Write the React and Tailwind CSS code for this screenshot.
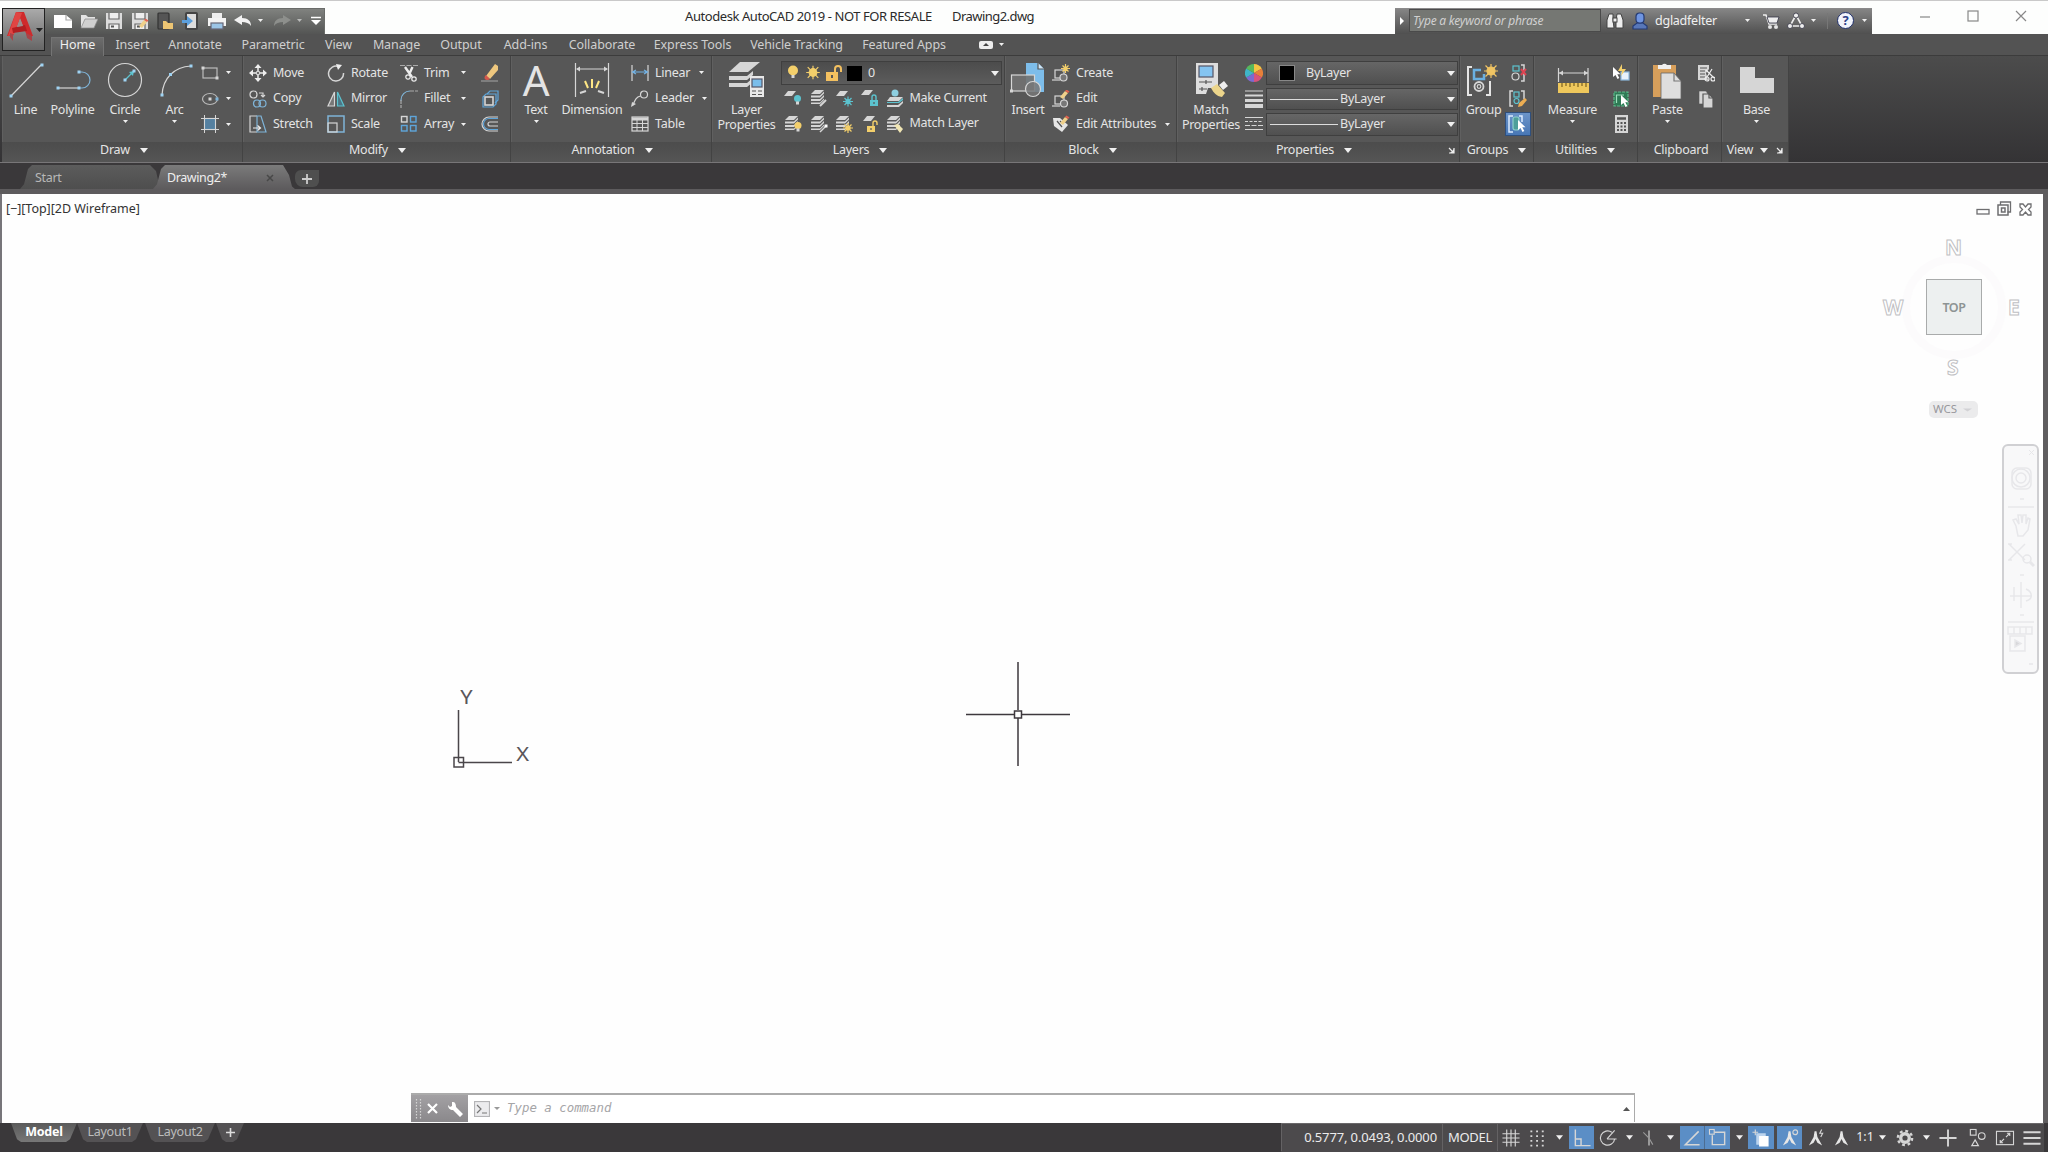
import React from 'react'
import clsx from 'clsx'

const L = '#d6d6d6'
const B = '#7fb4d8'
const Y = '#f3cf6b'
const T = '#5cc3cf'

function Svg({ w = 18, h, className, children }) {
  const height = h || w
  return (
    <svg width={w} height={height} viewBox={`0 0 ${w} ${height}`} fill="none" stroke={L} strokeWidth="1.2" className={clsx('shrink-0', className)}>
      {children}
    </svg>
  )
}

function Caret({ big, className }) {
  return big ? (
    <svg width="8" height="5" viewBox="0 0 8 5" className={clsx('shrink-0', className)}><path d="M0 0h8L4 5z" fill="#f0f0f0" /></svg>
  ) : (
    <svg width="5" height="3" viewBox="0 0 5 3" className={clsx('shrink-0', className)}><path d="M0 0h5L2.5 3z" fill="#f0f0f0" /></svg>
  )
}

/* ---------- small icon parts ---------- */
const Sheet = ({ x = 0, y = 0, fill = L }) => <path d={`M${x + 4} ${y}h8l-4 5h-8z`} fill={fill} stroke="none" />
const Stack = () => (
  <g stroke="none" fill={L}>
    <path d="M5 1h9l-4 4H1z" />
    <path d="M1 6.500h9l4-4v2l-4 4H1z" />
    <path d="M1 10h9l4-4v2l-4 4H1z" />
    <path d="M1 13.500h9l4-4v1.500l-4 4H1z" />
  </g>
)
const Bulb = ({ x, y, fill = Y, r = 3.5 }) => (
  <g stroke="none"><circle cx={x} cy={y} r={r} fill={fill} /><rect x={x - 1.5} y={y + r - 0.5} width="3" height="3" fill={L} /></g>
)
const Sun = ({ x, y, r = 3, fill = Y }) => (
  <g stroke={fill} strokeWidth="1.2">
    <circle cx={x} cy={y} r={r} fill={fill} />
    <path d={`M${x - r - 3} ${y}h${2 * r + 6}M${x} ${y - r - 3}v${2 * r + 6}M${x - r - 1.5} ${y - r - 1.5}l${2 * r + 3} ${2 * r + 3}M${x + r + 1.5} ${y - r - 1.5}l${-2 * r - 3} ${2 * r + 3}`} />
  </g>
)
const Lock = ({ x, y, fill, open }) => (
  <g>
    <path d={open ? `M${x + 6} ${y}v-3a2 2 0 0 1 4 0v2` : `M${x + 2} ${y}v-3a2 2 0 0 1 4 0v3`} stroke={fill} strokeWidth="1.4" />
    <rect x={x} y={y} width="8" height="6" fill={fill} stroke="none" />
    <path d={`M${x + 4} ${y + 2}v2`} stroke="#555" />
  </g>
)
const Cursor = ({ x, y }) => <path d={`M${x} ${y}v10l2.5-2 2 4 1.8-1-2-3.7h3.2z`} fill="#fff" stroke="none" />
const Pencil = ({ x = 9, y = 1 }) => (
  <g stroke="none"><path d={`M${x} ${y + 7}l5-6 3 2-5 6z`} fill="#efd08a" /><path d={`M${x + 5} ${y + 1}l1.5-1.5 3 2-1.500 1.500z`} fill="#e0624f" /></g>
)
const Dot = ({ x, y, fill = '#9fd3f3' }) => <rect x={x - 1.5} y={y - 1.5} width="3" height="3" fill={fill} stroke="none" />

const icons = {
  line: <Svg w={38}><path d="M4 35L34 4" /><Dot x={4} y={35} /><Dot x={35} y={4} /></Svg>,
  polyline: <Svg w={38}><path d="M4 27h21" /><path d="M25 11h3a8 8 0 0 1 0 16h-3" stroke={B} /><Dot x={4} y={27} /><Dot x={25} y={27} /><Dot x={25} y={11} /></Svg>,
  circle: <Svg w={38}><circle cx="19" cy="19" r="16.500" /><path d="M19 19l9-9" stroke={T} /><Dot x={19} y={19} /><path d="M28 10l-5 1 4 4z" fill={T} stroke="none" /><Dot x={28} y={10} /></Svg>,
  arc: <Svg w={38}><path d="M6 34C7 17 18 6 35 5" /><Dot x={6} y={34} /><Dot x={14.5} y={13.5} /><Dot x={35} y={5} /></Svg>,
  rect: <Svg><rect x="2" y="4" width="14" height="10" stroke="#bbb" /><Dot x={2} y={4} fill={L} /><Dot x={16} y={14} fill={L} /></Svg>,
  ellipse: <Svg><ellipse cx="9" cy="9" rx="7.500" ry="5.500" stroke="#bbb" /><Dot x={9} y={9} fill={L} /><Dot x={16} y={9} fill={B} /></Svg>,
  hatch: <Svg><rect x="3.500" y="3.500" width="11" height="11" fill="#5580a0" stroke={B} /><path d="M3.500 0v18M14.500 0v18M0 3.500h18M0 14.500h18" strokeWidth="1" /></Svg>,
  move: <Svg><path d="M9 2v14M2 9h14" stroke="#eee" strokeWidth="1.500" /><path d="M9 0l3.500 4h-7zM9 18l3.500-4h-7zM0 9l4-3.500v7zM18 9l-4-3.500v7z" fill="#eee" stroke="none" /><circle cx="9" cy="9" r="1.700" fill="#555" /></Svg>,
  copy: <Svg><circle cx="4.500" cy="4.500" r="3.500" /><path d="M10 3h4v4M12 5l2 2 2-2" /><circle cx="8" cy="13.500" r="3.500" stroke={B} /><circle cx="13.500" cy="13.500" r="3.500" stroke={B} /></Svg>,
  stretch: <Svg><path d="M8 1H1v16h7" /><path d="M8 1h4l5 16H8z" stroke={B} /><path d="M4 13h7M8.500 10.500l3 2.500-3 2.500" stroke="#eee" /></Svg>,
  rotate: <Svg><path d="M11.500 2.500A7.500 7.500 0 1 0 16.500 9" strokeWidth="1.500" /><path d="M9 0l6 1-4 5z" fill="#eee" stroke="none" /></Svg>,
  mirror: <Svg><path d="M7.500 2v14H1z" fill="#777" /><path d="M10.500 2v14H17z" stroke={T} fill="#4d7686" /></Svg>,
  scale: <Svg><rect x="1" y="1" width="16" height="16" stroke={B} strokeWidth="1.500" /><rect x="1" y="8" width="9" height="9" /></Svg>,
  trim: <Svg><path d="M0 1.500h18" strokeDasharray="5 1.500" stroke="#aaa" /><path d="M5 3l7 10M12.500 3L10 8.500" stroke="#eee" strokeWidth="2.400" /><circle cx="8" cy="13" r="2.200" stroke="#eee" /><circle cx="14" cy="15" r="2.200" stroke="#eee" /></Svg>,
  fillet: <Svg><path d="M1 11V10A9 9 0 0 1 10 1" stroke={B} /><path d="M10 1h8M1 10v8" stroke="#aaa" strokeDasharray="4 1" /></Svg>,
  array: <Svg>{[[1.5, 1.5], [10.5, 1.5], [1.5, 10.5], [10.5, 10.5]].map(([x, y]) => <rect key={`${x}-${y}`} x={x} y={y} width="5.500" height="5.500" stroke={x + y > 3 ? '#5ea5da' : L} strokeWidth="1.400" />)}</Svg>,
  erase: <Svg><path d="M5 12L14 0l3 2v4l-8 9z" fill="#eec77e" stroke="none" /><path d="M5 11l4 4c-2 2-7 1-5-3z" fill="#d4574c" stroke="none" /><path d="M0 17h17" stroke="#999" /></Svg>,
  explode: <Svg><path d="M6 4l3-3h8v9l-3 3" stroke="#5ea5da" /><path d="M2 7l3-3h10v10l-3 3H2z" stroke="#5ea5da" /><rect x="4" y="7" width="8" height="8" stroke={L} strokeWidth="1.600" /></Svg>,
  offset: <Svg><path d="M17 2H8a7 7 0 0 0 0 14h9" stroke={L} /><path d="M17 3.500H8a5.500 5.500 0 0 0 0 11h9" stroke="#5ea5da" /><path d="M17 7H9a2 2 0 0 0 0 4h8" stroke={L} /></Svg>,
  dimension: (
    <Svg w={38}>
      <path d="M2.500 2v34M35.500 2v34M4 8h30" />
      <path d="M3 8l4-2.500v5zM35 8l-4-2.500v5z" fill={L} stroke="none" />
      <path d="M19 18v9M12 20l3 7M26 20l-3 7" stroke="#ffe785" strokeWidth="2" />
      <path d="M7 32l6-2M31 32l-6-2" stroke={L} strokeWidth="2" />
    </Svg>
  ),
  linear: <Svg><path d="M1 1v16M17 1v16" /><path d="M1 8h16M5 6L1.500 8 5 10M13 6l3.500 2-3.500 2" stroke="#72b2e4" /></Svg>,
  leader: <Svg><circle cx="13" cy="4.500" r="3.500" /><path d="M9.500 6C5 7 4 10 2 15" /><path d="M0 17l1-5 4 2z" fill={L} stroke="none" /></Svg>,
  table: <Svg><rect x="1" y="2" width="16" height="14" /><path d="M1 4h16" strokeWidth="3" /><path d="M1 8.500h16M1 12.500h16M6 5v11M11.500 5v11" strokeWidth="1" /></Svg>,
  layerProps: (
    <Svg w={38}>
      <g fill={L} stroke="none">
        <path d="M12 1h20L20 11H1z" /><path d="M1 15h18l6-5v4l-6 5H1z" /><path d="M1 22h18l6-5v4l-6 5H1z" />
      </g>
      <rect x="22" y="15" width="14" height="21" fill="#e8e8e8" stroke="none" />
      <rect x="24" y="18" width="10" height="8" fill="#79bdea" stroke="#556" />
      <path d="M24 30h4M30 30h4M24 33.500h4M30 33.500h4" stroke="#555" />
    </Svg>
  ),
  layOff: <Svg><Sheet x={0} y={2} /><Bulb x={13.500} y={9.500} fill={T} /></Svg>,
  layIso: <Svg><Stack /><path d="M10 17l6-6" stroke={L} strokeWidth="2" /></Svg>,
  layFreeze: <Svg><Sheet x={1} y={2} /><Sun x={13} y={12.500} r={2} fill={T} /></Svg>,
  layLock: <Svg><Sheet x={0} y={1} /><Lock x={9} y={11} fill={T} /></Svg>,
  layCurrent: <Svg><path d="M4 8h13l-4 4H1z" fill={L} stroke="none" /><path d="M1 13h11l5-4v2l-4 3H1z" fill={T} stroke="none" /><path d="M1 16h11l5-4v2l-4 4H1z" fill={L} stroke="none" /><circle cx="9" cy="4" r="3.500" fill="#8ecfe0" stroke="none" /></Svg>,
  layOn: <Svg><Stack /><Bulb x={14} y={10.500} /></Svg>,
  layUniso: <Svg><Stack /><path d="M10 17l6-6" stroke={L} strokeWidth="1.500" /><Dot x={16} y={11} fill="#fff" /></Svg>,
  layThaw: <Svg><Stack /><Sun x={13} y={13} r={2} /></Svg>,
  layUnlock: <Svg><Sheet x={2} y={1} /><Lock x={6} y={11} fill={Y} open /></Svg>,
  layMatch: <Svg><Stack /><path d="M8 10l4-1 5 5-3 4z" fill="#f1e6b4" stroke="none" /></Svg>,
  insert: (
    <Svg w={38}>
      <path d="M17 2h12l6 6v23H17z" fill="#7dbdea" stroke="none" /><path d="M29 2v6h6" fill="#cfe6f7" stroke="#555" />
      <rect x="2.500" y="14" width="23" height="16" fill="#727272" fillOpacity=".9" /><circle cx="24" cy="28" r="7.500" fill="#777" fillOpacity=".85" />
      <Dot x={2.500} y={30} fill={L} />
    </Svg>
  ),
  create: <Svg><rect x="3" y="6" width="9" height="8" /><path d="M0 16h8" /><circle cx="11.500" cy="13.500" r="3.500" fill="#777" /><Sun x={13.500} y={4.500} r={1.500} /></Svg>,
  edit: <Svg><rect x="3" y="6" width="9" height="8" /><path d="M0 16h8" /><circle cx="12" cy="13.500" r="3.500" fill="#777" /><Pencil x={8} y={0} /></Svg>,
  editAttr: <Svg><path d="M1 3h7l8 7-6 7-8-6z" fill="#e6e6e6" stroke="none" /><path d="M5 6l5 6M8 6l2 2" stroke="#555" /><Pencil x={8} y={1} /></Svg>,
  matchProps: (
    <Svg w={38}>
      <path d="M4 2h22v25H16l-2 6H4z" fill="#dedede" stroke="none" /><rect x="7" y="5" width="14" height="11" fill="#84c4f1" stroke="#556" />
      <path d="M7 21h13M7 28h8M14 19v4M10 26v4" stroke="#555" /><path d="M27 24l5-4 4 5-5 4z" fill="#eee" stroke="none" /><path d="M19 27l6-4 8 9-3 4c-6-1-8-4-11-9z" fill="#ecd58b" stroke="none" />
    </Svg>
  ),
  colorWheel: (
    <Svg>
      <g stroke="none">
        <path d="M9 9V0a9 9 0 0 1 7.800 4.500z" fill="#f4c542" /><path d="M9 9l7.800-4.500a9 9 0 0 1 0 9z" fill="#e8803a" /><path d="M9 9l7.800 4.500A9 9 0 0 1 9 18z" fill="#d8527c" />
        <path d="M9 9v9a9 9 0 0 1-7.800-4.500z" fill="#7c6ad0" /><path d="M9 9l-7.800 4.500a9 9 0 0 1 0-9z" fill="#3fb5c9" /><path d="M9 9L1.200 4.500A9 9 0 0 1 9 0z" fill="#58b85c" />
      </g>
    </Svg>
  ),
  lineWeight: <Svg><path d="M0 1h18" strokeWidth="1" /><path d="M0 5.500h18" strokeWidth="2" /><path d="M0 10.500h18" strokeWidth="3" /><path d="M0 16h18" strokeWidth="4" /></Svg>,
  lineType: <Svg><path d="M0 2.500h18M0 14.500h18" /><path d="M0 6.500h18" strokeDasharray="3 1.500" /><path d="M0 10.500h18" strokeDasharray="5 1.500" /></Svg>,
  group: (
    <Svg w={38}>
      <path d="M7 6H3v28h4M21 34h4V20" stroke="#e5e5e5" strokeWidth="2" /><path d="M16 9H9v9h10v-5" stroke="#6ab0e2" strokeWidth="2.500" />
      <circle cx="14" cy="25.500" r="4.500" strokeWidth="1.800" /><circle cx="14" cy="25.500" r="1.800" /><Sun x={26} y={10} r={4} fill="#f0c463" />
    </Svg>
  ),
  ungroup: <Svg><path d="M12 1h3v16h-3" stroke={L} strokeWidth="1.500" /><rect x="4" y="2" width="6" height="5" stroke={T} /><circle cx="6.500" cy="12.500" r="3.500" /><path d="M12 5l5 6M17 5l-5 6" stroke="#dc4452" strokeWidth="2" /></Svg>,
  groupEdit: <Svg><path d="M4 1H1v15h3M12 1h3v8" stroke={L} strokeWidth="1.500" /><rect x="5" y="2" width="5" height="5" stroke={T} /><circle cx="7.500" cy="11" r="2.500" stroke={T} /><path d="M9 17l1-4 6-5 2 2-5 6z" fill="#ecad52" stroke="none" /></Svg>,
  groupSel: <Svg w={22} h={20}><path d="M6 2H2v16h4M12 2h3v6" stroke="#dcecff" strokeWidth="1.500" /><rect x="6" y="3" width="6" height="13" rx="2" fill="#4e9f9a" stroke="#8fd0cc" /><Cursor x={11} y={6} /></Svg>,
  measure: <Svg w={38}><path d="M4.500 7v14M34 7v14M5 12h29" stroke={L} /><path d="M5 12l4-2.500v5zM34 12l-4-2.500v5z" fill={L} stroke="none" /><rect x="4" y="22" width="31" height="10" fill="#efc85c" stroke="none" /><path d="M8 22v4M12 22v3M16 22v4M20 22v3M24 22v4M28 22v3M32 22v4" stroke="#7a6120" /></Svg>,
  quickSel: <Svg><rect x="9" y="8" width="8" height="8" fill="#e8f2fb" stroke="#8bb8dd" /><path d="M10 0L6 7h4l-1 5 5-7h-4z" fill={Y} stroke="none" /><Cursor x={1} y={3} /></Svg>,
  selAll: <Svg><rect x="2" y="2" width="14" height="14" fill="#2f7a55" stroke="#5bb98a" strokeDasharray="3 1" /><path d="M4.500 13V5H12" stroke="#9ee0bd" /><Cursor x={9} y={5} /></Svg>,
  calc: <Svg><rect x="3" y="0" width="13" height="18" fill={L} stroke="none" /><path d="M5 3.500h9" stroke="#555" strokeWidth="2.500" /><path d="M5 8h9M5 11.500h9M5 15h9" stroke="#555" strokeWidth="2" strokeDasharray="2 1.500" /></Svg>,
  paste: <Svg w={38}><rect x="4" y="4" width="23" height="32" fill="#d79f5b" stroke="none" /><path d="M9 8V4h4a3 3 0 0 1 5 0h4v4z" fill="#f0f0f0" stroke="none" /><path d="M12 12h13l7 8v18H12z" fill="#dedede" stroke="#666" strokeWidth=".8" /><path d="M25 12v8h7" stroke="#777" /></Svg>,
  cut: <Svg><path d="M1 1h11v4l-3 4 2 7H1z" fill={L} stroke="none" /><path d="M3 4h7M3 7h5M3 10h5M3 13h5" stroke="#555" /><path d="M9 6l8 8M15 5l-5 8" stroke="#eee" /><circle cx="10" cy="15" r="2" stroke="#eee" /><circle cx="16" cy="15" r="2" stroke="#eee" /></Svg>,
  copyClip: <Svg><path d="M2 1h7l2 3v10H2z" fill={L} stroke="#555" strokeWidth=".6" /><path d="M6 4h6l4 4v10H6z" fill={L} stroke="#555" /><path d="M12 4v4h4" stroke="#555" /></Svg>,
  base: <Svg w={38}><path d="M2 6h15v11h19v15H2z" fill={L} stroke="none" /></Svg>,
}

/* ---------- ribbon ---------- */
function BigButton({ icon, label, second, arrow, className }) {
  return (
    <div className={clsx('flex flex-col items-center pt-[5px] text-center whitespace-nowrap', className)}>
      <div className="h-[39px] shrink-0">{icon}</div>
      <span className="h-4 leading-[19px]">{label}</span>
      {second && <span className="leading-[17px]">{second}</span>}
      {arrow && <Caret className="mt-[4px]" />}
    </div>
  )
}

function Row({ icon, label, arrow, active }) {
  return (
    <div className="flex h-[25.7px] items-center whitespace-nowrap">
      <span className={clsx('flex w-[18px] shrink-0 justify-center', active && '-mx-1 w-[26px] border border-[#2f4f7c] bg-gradient-to-b from-[#6b94c9] to-[#4877b5] py-px')}>{icon}</span>
      {label && <span className="pl-[6px]">{label}</span>}
      {arrow && <Caret className={arrow} />}
    </div>
  )
}

function Rows({ items, className }) {
  return (
    <div className={clsx('pt-[4px]', className)}>
      {items.map((item, i) => <Row key={i} icon={icons[item[0]]} label={item[1]} arrow={item[2]} active={item[3]} />)}
    </div>
  )
}

function Panel({ title, arrow = true, launcher, className, titleClass, children }) {
  return (
    <section className={clsx('flex shrink-0 flex-col border-r border-[#434343] bg-[#575757] shadow-[inset_1px_0_0_#606060]', className)}>
      <div className="flex h-[86px]">{children}</div>
      <div className={clsx('flex h-[20px] items-center justify-center gap-[10px] bg-gradient-to-b from-[#4c4c4c] to-[#555] pb-[3px]', titleClass)}>
        <span>{title}</span>
        {arrow && <Caret big />}
        {launcher && <Svg w={7} className={launcher}><path d="M1 1l3 3M6 1v5H1" stroke="#eee" /><path d="M6 2v4H2z" fill="#eee" stroke="none" /></Svg>}
      </div>
    </section>
  )
}

function Combo({ className, children }) {
  return (
    <div className={clsx('flex items-center border border-[#3f3f3f] bg-gradient-to-b from-[#666] to-[#505050] pr-[2px]', className)}>
      {children}
      <Caret big className="ml-auto" />
    </div>
  )
}

function Ribbon() {
  return (
    <div className="flex h-[107px] border-t border-[#3c3c3c] bg-gradient-to-b from-[#4c4c4c] to-[#343335] pl-[2px] text-[12.5px] tracking-[-0.25px] text-[#e4e4e4]">
      <Panel title="Draw" titleClass="pl-1" className="w-[241px]">
        <BigButton icon={icons.line} label="Line" className="w-[47px]" />
        <BigButton icon={icons.polyline} label="Polyline" className="w-[47px]" />
        <BigButton icon={icons.circle} label="Circle" arrow className="w-[58px]" />
        <BigButton icon={icons.arc} label="Arc" arrow className="w-[41px]" />
        <Rows className="pl-[6px]" items={[['rect', '', 'ml-[7px]'], ['ellipse', '', 'ml-[7px]'], ['hatch', '', 'ml-[7px]']]} />
      </Panel>

      <Panel title="Modify" titleClass="pl-[2px]" className="w-[268px]">
        <Rows className="w-[78px] pl-[6px]" items={[['move', 'Move'], ['copy', 'Copy'], ['stretch', 'Stretch']]} />
        <Rows className="w-[73px] pl-[6px]" items={[['rotate', 'Rotate'], ['mirror', 'Mirror'], ['scale', 'Scale']]} />
        <div className="flex w-[80px] pl-[6px]">
          <Rows className="w-[61px]" items={[['trim', 'Trim'], ['fillet', 'Fillet'], ['array', 'Array']]} />
          <div className="flex flex-col pt-[4px]">
            {[0, 1, 2].map((i) => <span key={i} className="flex h-[25.7px] items-center"><Caret /></span>)}
          </div>
        </div>
        <Rows className="pl-[7px]" items={[['erase'], ['explode'], ['offset']]} />
      </Panel>

      <Panel title="Annotation" titleClass="pl-[2px]" className="w-[201px]">
        <BigButton icon={<span className="block text-[42px] leading-[38px] text-[#e4e4e4]">A</span>} label="Text" arrow className="w-[50px]" />
        <BigButton icon={icons.dimension} label="Dimension" className="w-[62px]" />
        <Rows className="pl-[8px]" items={[['linear', 'Linear', 'ml-[9px]'], ['leader', 'Leader', 'ml-[8px]'], ['table', 'Table']]} />
      </Panel>

      <Panel title="Layers" titleClass="pl-1" className="w-[293px]">
        <BigButton icon={icons.layerProps} label="Layer" second="Properties" className="w-[69px]" />
        <div className="pt-[5px]">
          <Combo className="h-[24px] w-[221px] bg-gradient-to-b! from-[#4c4c4c]! to-[#5c5c5c]! pl-[3px]">
            <Svg w={62} h={20}><Bulb x={8} y={7.500} r={5} /><Sun x={28} y={9.500} r={3.800} /><path d="M50 9V6a3 3 0 0 1 6 0v3" stroke="#f3c060" strokeWidth="2" /><path d="M41 9h12v9H41z" fill="#f3c060" stroke="none" /><path d="M47 12v3" stroke="#555" strokeWidth="2" /></Svg>
            <span className="h-[15px] w-[15px] bg-black" />
            <span className="pl-[6px]">0</span>
          </Combo>
          {[['layOff', 'layIso', 'layFreeze', 'layLock', 'layCurrent', 'Make Current'], ['layOn', 'layUniso', 'layThaw', 'layUnlock', 'layMatch', 'Match Layer']].map((row) => (
            <div key={row[5]} className="flex h-[25.7px] items-center gap-[7.5px] pl-[3px] whitespace-nowrap">
              {row.slice(0, 5).map((name) => <React.Fragment key={name}>{icons[name]}</React.Fragment>)}
              <span className="-ml-[2px]">{row[5]}</span>
            </div>
          ))}
        </div>
      </Panel>

      <Panel title="Block" titleClass="pl-1" className="w-[172px]">
        <BigButton icon={icons.insert} label="Insert" className="w-[46px]" />
        <Rows className="pl-px" items={[['create', 'Create'], ['edit', 'Edit'], ['editAttr', 'Edit Attributes', 'ml-[9px]']]} />
      </Panel>

      <Panel title="Properties" launcher="absolute right-[4px]" titleClass="relative pr-[8px]" className="w-[283px]">
        <BigButton icon={icons.matchProps} label="Match" second="Properties" className="w-[68px]" />
        <Rows className="w-[21px]" items={[['colorWheel'], ['lineWeight'], ['lineType']]} />
        <div className="flex flex-col gap-[3px] pt-[5px]">
          <Combo className="h-[24px] w-[192px] pl-[12px]"><span className="mr-[11px] h-4 w-4 border border-[#888] bg-black" />ByLayer</Combo>
          <Combo className="h-[22px] w-[192px] pl-[3px]"><span className="mr-[2px] h-px w-[68px] bg-[#ddd]" />ByLayer</Combo>
          <Combo className="h-[23px] w-[192px] pl-[3px]"><span className="mr-[2px] h-px w-[68px] bg-[#ddd]" />ByLayer</Combo>
        </div>
      </Panel>

      <Panel title="Groups" className="w-[74px]">
        <BigButton icon={icons.group} label="Group" className="w-[47px]" />
        <Rows className="pl-[2px]" items={[['ungroup'], ['groupEdit'], ['groupSel', '', '', true]]} />
      </Panel>

      <Panel title="Utilities" titleClass="pr-px" className="w-[104px]">
        <BigButton icon={icons.measure} label="Measure" arrow className="w-[77px]" />
        <Rows className="pl-px" items={[['quickSel'], ['selAll'], ['calc']]} />
      </Panel>

      <Panel title="Clipboard" arrow={false} titleClass="pl-[3px]" className="w-[84px]">
        <BigButton icon={icons.paste} label="Paste" arrow className="w-[59px]" />
        <Rows items={[['cut'], ['copyClip']]} />
      </Panel>

      <Panel title="View" launcher="ml-px" titleClass="gap-[7px]!" className="w-[67px]">
        <BigButton icon={icons.base} label="Base" arrow className="w-[70px] pl-[3px]" />
      </Panel>
    </div>
  )
}

/* ---------- title bar ---------- */
const floppy = <><path d="M1 1h16v16H1z" fill="#dcdcdc" stroke="none" /><path d="M4 1v6h10V1M4 17v-5h10v5" stroke="#666" fill="#eee" /><path d="M6 14.500h3" stroke="#555" strokeWidth="2" /></>

function QuickAccess() {
  return (
    <div className="flex h-[26px] w-[280px] shrink-0 items-center border-t border-r border-[#6a6c69] bg-gradient-to-b from-[#80827f] to-[#545554] pb-[2px] pl-[9px]">
      <div className="flex gap-[7.600px]">
        <Svg><path d="M0 3h12l6 5v8H0z" fill="#fff" stroke="none" /><path d="M12 3v5h6" stroke="#aaa" /></Svg>
        <Svg><path d="M1 16V3h5l2 2h7v4" fill="#e3e3e3" stroke="none" /><path d="M1 16l4-9h13l-4 9z" fill="#d0d0d0" stroke="#888" strokeWidth=".7" /></Svg>
        <Svg>{floppy}</Svg>
        <Svg>{floppy}<Pencil x={8} y={7} /></Svg>
        <Svg><rect x="2" y="1" width="11" height="16" rx="1" fill="#555" stroke="#333" /><path d="M7 9h3l2 2h5v6H7z" fill="#edc573" stroke="none" /></Svg>
        <Svg><rect x="4" y="1" width="11" height="16" rx="1" fill="#ddd" stroke="#444" strokeWidth="2" /><path d="M0 8h5V4l6 5-6 5v-3H0z" fill="#5c9fdc" stroke="none" /></Svg>
        <Svg><rect x="4" y="1" width="10" height="5" fill="#eee" stroke="none" /><rect x="0" y="6" width="18" height="8" fill="#f3f3f3" stroke="none" /><rect x="3" y="11" width="12" height="6" fill="#9cc5e7" stroke="#667" /></Svg>
      </div>
      <Svg className="ml-[8px]"><path d="M0 8l8-5v3c6 0 9 3 9 8-2-3-5-4-9-4v3z" fill="#f2f2f2" stroke="none" /></Svg>
      <Caret className="ml-[6px]" />
      <Svg className="ml-[10px]"><path d="M18 8l-8-5v3c-6 0-9 3-9 8 2-3 5-4 9-4v3z" fill="#8d8f8c" stroke="none" /></Svg>
      <Caret className="ml-[6px] opacity-60" />
      <Svg w={10} className="ml-[9px]"><path d="M0 1.500h10" stroke="#fff" strokeWidth="1.500" /><path d="M0 4h10L5 9z" fill="#fff" stroke="none" /></Svg>
    </div>
  )
}

function InfoCenter() {
  return (
    <div className="flex h-[26px] w-[477px] shrink-0 items-center border-t border-[#8a8a8a] bg-gradient-to-b from-[#858585] to-[#505050] pb-[2px] text-[12.5px] text-[#f0f0f0]">
      <svg width="14" height="8" viewBox="0 0 14 8"><path d="M5 0l4 4-4 4z" fill="#fff" /></svg>
      <div className="flex h-[23px] w-[192px] items-center border border-[#4a4a4a] bg-[#757773] pl-[3px] text-[12px] tracking-[-0.22px] text-[#d0d0d0] italic">Type a keyword or phrase</div>
      <Svg className="ml-[5px]"><g fill="#eee" stroke="#444" strokeWidth="1"><path d="M3 2h4v6l1 8H1V8zM11 2h4l2 6v8h-7V8z" /><rect x="7" y="6" width="4" height="4" /></g></Svg>
      <Svg className="ml-[7px]"><path d="M6 11h6l4 3v3H2v-3z" fill="#5877b8" stroke="#243a73" /><rect x="5" y="1" width="8" height="10" rx="3.500" fill="#6f95e2" stroke="#243a73" /></Svg>
      <span className="w-[92px] pt-[2px] pl-[6px] tracking-[-0.25px]">dgladfelter</span>
      <Caret className="ml-[4px]" />
      <Svg className="ml-[12px]"><path d="M1 3h3l3 9h8" stroke="#eee" strokeWidth="1.500" /><path d="M5 5h12l-2 6H7z" fill="#eee" stroke="#334" strokeWidth=".8" /><circle cx="8" cy="15" r="1.500" fill="#eee" /><circle cx="14" cy="15" r="1.500" fill="#eee" /></Svg>
      <Svg className="ml-[7px]"><path d="M9 3L3 14h12z" stroke="#eee" strokeWidth="1.600" /><g fill="#eee" stroke="#334" strokeWidth=".8"><circle cx="9" cy="3.500" r="2.500" /><circle cx="3" cy="14" r="2.500" /><circle cx="15" cy="14" r="2.500" /></g></Svg>
      <Caret className="ml-[6px]" />
      <span className="ml-[11px] h-4 w-px bg-[#777]" />
      <span className="ml-[9px] flex h-[17px] w-[17px] items-center justify-center rounded-full border border-[#20306c] bg-[#f2f4fb] text-[13px] font-bold text-[#2c3f87]">?</span>
      <Caret className="ml-[8px]" />
    </div>
  )
}

const menuTabs = [
  ['Insert', 'w-[51px]'], ['Annotate', 'w-[74px]'], ['Parametric', 'w-[82px]'], ['View', 'w-[49px]'], ['Manage', 'w-[67px]'],
  ['Output', 'w-[62px]'], ['Add-ins', 'w-[67px]'], ['Collaborate', 'w-[86px]'], ['Express Tools', 'w-[95px]'],
  ['Vehicle Tracking', 'w-[113px]'], ['Featured Apps', 'w-[102px]'],
]

function Header() {
  return (
    <header className="relative">
      <div className="flex h-[34px] items-end border-t border-[#c9c9c9] bg-[#fdfefd] pl-[45px]">
        <QuickAccess />
        <div className="flex flex-1 self-center pb-[2px] pl-[360px] text-[13px] whitespace-pre text-[#2b2b2b]">
          <span className="w-[267px] tracking-[-0.43px]">Autodesk AutoCAD 2019 - NOT FOR RESALE</span>
          <span className="tracking-[-0.55px]">Drawing2.dwg</span>
        </div>
        <InfoCenter />
        <div className="flex w-[176px] items-center gap-[36px] self-center pb-[3px] pl-[47px]">
          <Svg w={12}><path d="M1 7h10" stroke="#888" /></Svg>
          <Svg w={12}><rect x="1" y="1" width="10" height="10" stroke="#888" /></Svg>
          <Svg w={12}><path d="M1 1l10 10M11 1L1 11" stroke="#888" /></Svg>
        </div>
      </div>
      <nav className="flex h-[21px] items-center bg-[#535353] pl-[51px] text-[12.5px] text-[#cfcfcf]">
        <div className="mt-1 mr-[3px] flex h-[19px] w-[53px] items-center justify-center border border-b-0 border-[#747474] bg-gradient-to-b from-[#6c6c6c] to-[#575757] pb-[3px] text-[#f0f0f0]">Home</div>
        {menuTabs.map(([name, w]) => <span key={name} className={clsx('pt-[2px] text-center tracking-[-0.1px] whitespace-nowrap', w)}>{name}</span>)}
        <span className="ml-6 flex h-[8px] w-[14px] items-center justify-center rounded-[2px] bg-[#eee]"><svg width="6" height="3" viewBox="0 0 6 3"><path d="M3 0l3 3H0z" fill="#444" /></svg></span>
        <Caret className="ml-[6px]" />
      </nav>
      <div className="absolute top-[8px] left-[2px] flex h-[43px] w-[43px] items-center border border-[#222] bg-gradient-to-b from-[#aaa] to-[#666] pl-[4px]">
        <svg width="27" height="34" viewBox="0 0 27 34" className="-mt-[5px]">
          <path d="M9 2h8l9 24h-6L13 8 6 26H0z" fill="#cf2a2c" />
          <path d="M9 2l6 1-8 21-6 2z" fill="#e04543" />
          <path d="M5 18l13-3 2 6-14 2z" fill="#b11e21" />
          <path d="M13 9l3 7-6 1z" fill="#9d8d8d" />
          <path d="M3 23l3 1v7l-3-4zM19 23l6 3v5l-5-3z" fill="#a84448" />
        </svg>
        <svg width="7" height="4" viewBox="0 0 7 4" className="ml-[2px]"><path d="M0 0h7L3.500 4z" fill="#222" /></svg>
      </div>
    </header>
  )
}

function FileTabs() {
  return (
    <div className="flex h-[32px] items-end border-t border-b-[5px] border-t-[#787678] border-b-[#5d5b5d] bg-[#3a383a] pl-[20px] text-[12.5px]">
      <div className="flex h-[24px] w-[140px] items-center bg-gradient-to-b from-[#5c5c5c] to-[#4e4e4e] pt-[2px] pl-[15px] tracking-[-0.3px] text-[#b8b8b8] [clip-path:polygon(0_100%,4px_80%,8px_4px,12px_0,130px_0,136px_6px,140px_100%)]">Start</div>
      <div className="-ml-[7px] flex h-[24px] w-[142px] items-center bg-gradient-to-b from-[#7b7b7b] to-[#5d5b5d] pt-[2px] pl-[14px] text-[#eee] [clip-path:polygon(0_100%,4px_80%,8px_4px,12px_0,130px_0,136px_10px,139px_90%,142px_100%)]">
        <span className="w-[99px] tracking-[-0.4px]">Drawing2*</span>
        <Svg w={8}><path d="M1 1l6 6M7 1L1 7" stroke="#484848" strokeWidth="1.500" /></Svg>
      </div>
      <div className="mb-[2px] flex h-[17px] w-[24px] items-center justify-center rounded-tl-md rounded-br-md rounded-bl-lg bg-[#4f4f4f]">
        <Svg w={10}><path d="M5 0v10M0 5h10" stroke="#ccc" strokeWidth="1.800" /></Svg>
      </div>
    </div>
  )
}

/* ---------- drawing area ---------- */
function ViewCube() {
  const letter = 'absolute text-[21px] font-bold leading-none text-white [-webkit-text-stroke:1px_#c0c0c3]'
  return (
    <div className="absolute top-[40px] left-[1878px] h-[190px] w-[150px]">
      <div className="absolute top-[21px] left-[22px] h-[104px] w-[104px] rounded-full border-[8px] border-[#fcfbfc]" />
      <span className={clsx(letter, 'top-[3px] left-[65px]')}>N</span>
      <span className={clsx(letter, 'top-[63px] left-[3px]')}>W</span>
      <span className={clsx(letter, 'top-[63px] left-[128px]')}>E</span>
      <span className={clsx(letter, 'top-[123px] left-[67px]')}>S</span>
      <div className="absolute top-[45px] left-[46px] flex h-[56px] w-[56px] items-center justify-center border border-[#a9abab] bg-[#edf0f0] pt-[2px] text-[12.5px] font-semibold tracking-[-0.4px] text-[#8d9494]">TOP</div>
      <div className="absolute top-[167px] left-[49px] flex h-[17px] w-[49px] items-center rounded-[5px] bg-[#ebebec] pl-[4px] text-[11.5px] text-[#98989c]">
        WCS
        <svg width="9" height="4" viewBox="0 0 9 4" className="ml-[6px]"><path d="M0 0.500h9l-4.500 3z" fill="#d2d2d5" /></svg>
      </div>
    </div>
  )
}

function NavBar() {
  return (
    <div className="absolute top-[250px] left-[2000px] flex h-[230px] w-[37px] flex-col items-center rounded-[6px] border-2 border-[#d0d0d3] bg-[#f8f8f9]">
      <svg width="33" height="226" viewBox="0 0 33 226" fill="none" stroke="#e7e7ea" strokeWidth="1.500">
        <path d="M25 4l5 5M30 4l-5 5" strokeWidth="1" />
        <rect x="8" y="22" width="19" height="21" rx="5" /><circle cx="17" cy="32" r="9" /><circle cx="17" cy="32" r="5" />
        <path d="M16 53h4M4 61h26M16 129h4M16 169h4M4 176h26" />
        <path d="M12 80l-3-6 3-1 3 5-1-9 3 0 1 8 1-8h3l0 9 2-6 2 1-2 11-5 6h-5z" />
        <path d="M5 98l16 16M21 98L5 114M4 98h4M4 114h4" /><circle cx="23" cy="113" r="4" /><path d="M26 116l4 4" strokeWidth="3" />
        <path d="M17 136v26M10 141v14M6 150h22M22 143c7 3 7 10 0 12" />
        <rect x="4" y="181" width="24" height="7" /><path d="M10 181v7M16 181v7M22 181v7" /><rect x="6" y="190" width="15" height="15" /><path d="M11 194v7l6-3.500z" fill="#d8d8db" />
        <path d="M25 218h4" />
      </svg>
    </div>
  )
}

function Canvas() {
  return (
    <main className="relative h-[929px] border-r-[5px] border-l-2 border-r-[#5f5d5f] border-l-[#77757a] bg-[#fefefe]">
      <div className="absolute top-[7px] left-[4px] text-[12.5px] tracking-[-0.03px] text-[#333]">[−][Top][2D Wireframe]</div>
      <svg width="58" height="16" viewBox="0 0 58 16" fill="none" stroke="#6e6e70" strokeWidth="1.500" className="absolute top-[7px] left-[1974px]">
        <rect x="1" y="8.500" width="12" height="4.500" strokeWidth="1.300" />
        <rect x="22" y="4" width="10" height="10" /><path d="M24.500 4V1h10v10h-3" strokeWidth="1.300" /><rect x="25.500" y="7" width="3.500" height="4" />
        <path d="M44 3h3l2.500 3L52 3h3v3l-2.500 2.500L55 11v3h-3l-2.500-3-2.500 3h-3v-3l2.500-2.500L44 6z" strokeWidth="1.300" />
      </svg>

      {/* UCS icon */}
      <svg width="62" height="60" viewBox="0 0 62 60" fill="none" stroke="#4a464a" strokeWidth="1.500" className="absolute top-[514px] left-[450px]">
        <path d="M6.500 2v52M6.500 54.500H60" /><rect x="2" y="49.500" width="9.500" height="9.500" />
      </svg>
      <span className="absolute top-[492px] left-[459px] text-[19px] leading-[22px] text-[#5a565a]"><span className="inline-block scale-x-115">Y</span></span>
      <span className="absolute top-[549px] left-[515px] text-[19px] leading-[22px] text-[#5a565a]"><span className="inline-block scale-x-115">X</span></span>

      {/* crosshair */}
      <svg width="106" height="106" viewBox="0 0 106 106" fill="none" stroke="#3e393e" strokeWidth="1.500" className="absolute top-[467px] left-[963px]">
        <path d="M53 1v48M53 57v48M1 53.500h48M57 53.500h48" /><rect x="49.500" y="50" width="7" height="7" />
      </svg>

      <ViewCube />
      <NavBar />

      <div className="absolute top-[899px] left-[409px] flex h-[29px] w-[1224px] border-t-2 border-r border-[#ababab]">
        <div className="flex w-[57px] items-center bg-gradient-to-b from-[#a3a1a4] to-[#8a888b] pl-1 text-white">
          <Svg w={7} h={20}><path d="M1.500 0v20M5.500 0v20" stroke="#d5d5d5" strokeDasharray="1.500 1.500" /></Svg>
          <Svg w={11} className="ml-[5px]"><path d="M1 1l9 9M10 1l-9 9" stroke="#fff" strokeWidth="2.200" /></Svg>
          <Svg w={16} className="ml-[10px]"><path d="M5 1L4 1v4l-2 1L0 4c0 3 2 5 5 5l7 7 3-3-7-7c0-3-1-5-3-5z" fill="#fff" stroke="none" /></Svg>
        </div>
        <div className="flex flex-1 items-center bg-white pl-[6px]">
          <Svg w={16}><rect x=".5" y=".5" width="15" height="15" fill="#ececee" stroke="#b4b4b6" /><path d="M3 4l4 4-4 4M8 12h5" stroke="#777" /></Svg>
          <svg width="6" height="3" viewBox="0 0 6 3" className="ml-[4px]"><path d="M0 0h6L3 3z" fill="#999" /></svg>
          <span className="ml-[7px] font-['DejaVu_Sans_Mono','Liberation_Mono',monospace] text-[12.4px] text-[#a5a5a7] italic">Type a command</span>
          <svg width="7" height="4" viewBox="0 0 7 4" className="mr-[4px] ml-auto"><path d="M3.500 0L7 4H0z" fill="#555" /></svg>
        </div>
      </div>
    </main>
  )
}

/* ---------- bottom bar ---------- */
const AnnoMark = ({ children }) => <><path d="M8.500 3h2l1 6 5 9-5-3-2-4-2 4-5 3 5-9z" fill="#e6e6e6" stroke="none" />{children}</>

const status = [
  { w: 'w-[26px]', icon: <path d="M5.500 1v18M10 1v18M14.500 1v18M1 5.500h18M1 10h18M1 14.500h18" /> },
  { w: 'w-[28px]', icon: <path d="M2 3h16M2 8h16M2 13h16M2 18h16" strokeWidth="2" strokeDasharray="2 4" /> },
  { w: 'w-[14px] mr-[3px]' },
  { w: 'w-[25px]', on: true, icon: <path d="M3 1v17h16M3 11h6v7" strokeWidth="1.500" /> },
  { w: 'w-[28px]', icon: <><path d="M14 4a7.500 7.500 0 1 0 3 7M9 11l8-9M9 11h10" /></> },
  { w: 'w-[14px]' },
  { w: 'w-[26px]', icon: <><path d="M10 2v16" /><path d="M4 4l6 6 4 7" stroke="#999" /></> },
  { w: 'w-[16px] mr-[2px]' },
  { w: 'w-[25px] border-r border-[#4c6d92]', on: true, icon: <path d="M17 3L3 17h15" strokeWidth="1.600" /> },
  { w: 'w-[25px]', on: true, icon: <><path d="M6 4h11v13H4V7" strokeWidth="1.500" /><rect x="1" y="1" width="5" height="5" fill="#5c8fc7" /></> },
  { w: 'w-[18px]' },
  { w: 'w-[26px] mr-[3px]', on: true, icon: <><path d="M5 5h10v12H5z" fill="#bcd4ee" stroke="none" /><path d="M8 8h10v11H8z" fill="#fff" stroke="none" /><path d="M1 4h6M4 1v6" /></> },
  { w: 'w-[25px]', on: true, icon: <AnnoMark><circle cx="15.500" cy="4" r="2.500" /></AnnoMark> },
  { w: 'w-[27px]', icon: <AnnoMark><path d="M16 1l-2 4h3l-2 4" /></AnnoMark> },
  { w: 'w-[25px]', icon: <AnnoMark /> },
  { w: 'w-[22px]', text: '1:1' },
  { w: 'w-[13px]' },
  { w: 'w-[32px]', icon: <><circle cx="10" cy="10" r="4.500" strokeWidth="3.500" /><circle cx="10" cy="10" r="7.500" strokeWidth="2.500" strokeDasharray="3 2.900" /></> },
  { w: 'w-[11px]' },
  { w: 'w-[32px]', icon: <path d="M10 1v18M1 10h18" strokeWidth="2" /> },
  { w: 'w-[26px]', icon: <><rect x="3" y="1" width="6" height="6" /><circle cx="15" cy="8" r="3.500" /><path d="M8 12l3.500 6h-7z" /></> },
  { w: 'w-[30px]', icon: <><rect x="1" y="3" width="18" height="14" /><path d="M11 9l4-4M12 5h3v3M9 11l-4 4M5 12v3h3" /></> },
  { w: 'w-[24px]', icon: <path d="M1 4h18M1 10h18M1 16h18" strokeWidth="2.200" /> },
]

function BottomBar() {
  const tab = 'flex h-[19px] items-center justify-center [clip-path:polygon(0_0,100%_0,calc(100%-7px)_85%,calc(100%-11px)_100%,10px_100%,6px_85%)]'
  return (
    <footer className="flex h-[29px] justify-between bg-[#3a383a] pr-[4px] pl-[11px] text-[12.5px] text-[#bdbdbd]">
      <div className="flex tracking-[-0.25px]">
        <span className={clsx(tab, 'w-[66px] bg-gradient-to-b from-[#5a5a5a] to-[#777] font-bold text-white')}>Model</span>
        <span className={clsx(tab, 'w-[66px] bg-[#545254]')}>Layout1</span>
        <span className={clsx(tab, 'ml-[2px] w-[70px] bg-[#545254]')}>Layout2</span>
        <span className={clsx(tab, 'ml-px w-[28px] bg-[#545254]')}><Svg w={9}><path d="M4.500 0v9M0 4.500h9" stroke="#ddd" strokeWidth="1.600" /></Svg></span>
      </div>
      <div className="flex border-t border-[#6a686a] bg-[#4c4a4c] pb-px text-[#ececec]">
        <span className="flex w-[162px] items-center justify-end border-x border-[#646264] pr-[5px] text-[13px] tracking-[-0.13px]">0.5777, 0.0493, 0.0000</span>
        <span className="flex w-[55px] items-center justify-center border-r border-[#646264] text-[13px] tracking-[-0.3px]">MODEL</span>
        {status.map((s, i) => (
          <span key={i} className={clsx('my-[2px] flex shrink-0 items-center justify-center', s.w, s.on && 'bg-[#5b8ec6]')}>
            {s.icon && <Svg w={20} className="scale-95">{s.icon}</Svg>}
            {s.text}
            {!s.icon && !s.text && <Caret big className="w-[7px]" />}
          </span>
        ))}
      </div>
    </footer>
  )
}

export default function App() {
  return (
    <div className="h-[1152px] w-[2048px] overflow-hidden bg-[#3a383a] font-['Noto_Sans','Open_Sans',sans-serif] leading-[1.3]">
      <Header />
      <Ribbon />
      <FileTabs />
      <Canvas />
      <BottomBar />
    </div>
  )
}
